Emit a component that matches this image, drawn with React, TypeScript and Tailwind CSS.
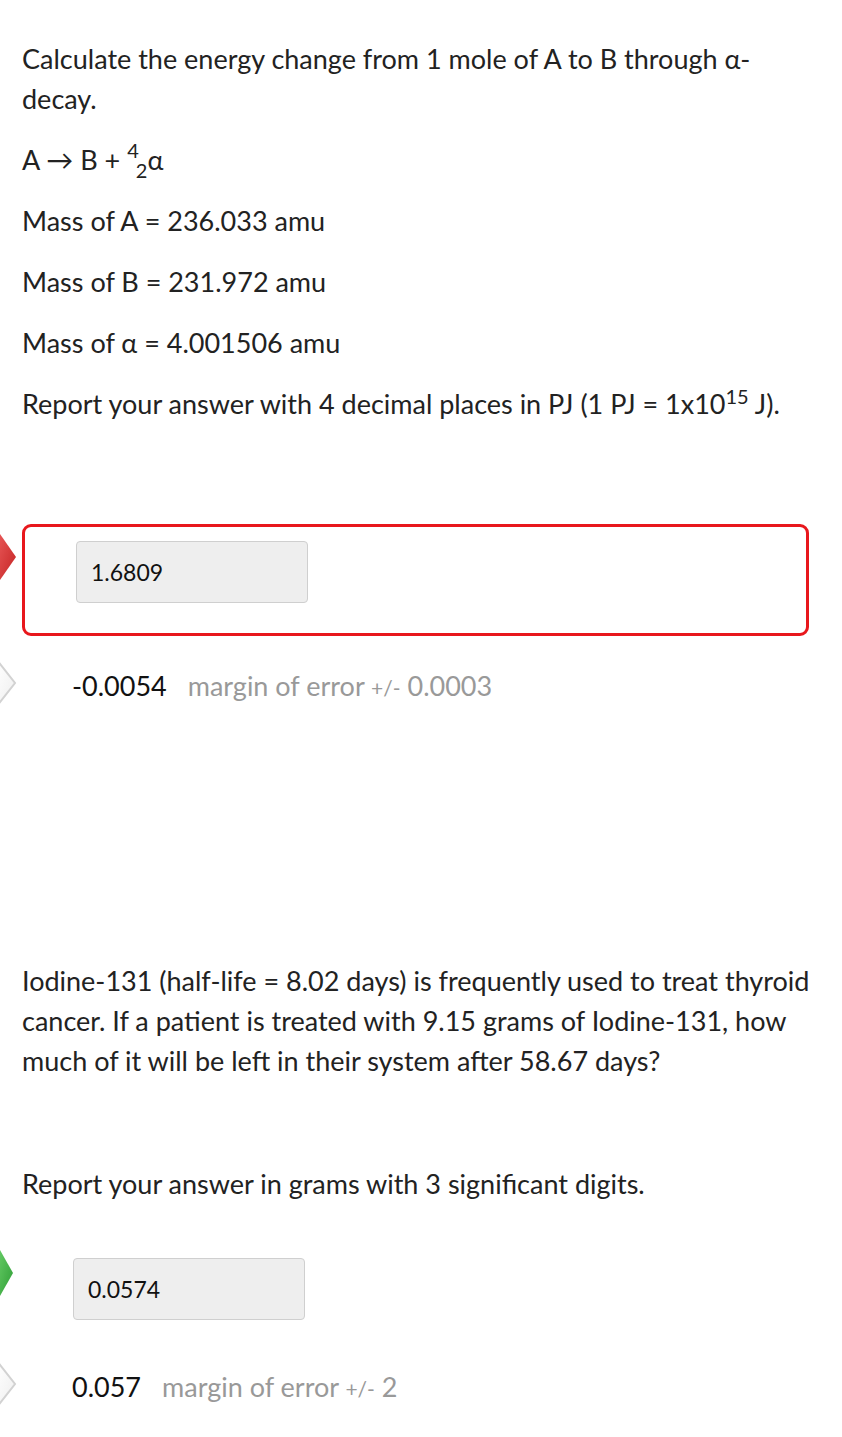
import React from 'react';

function Marker({ kind, top, tip }: { kind: 'red' | 'green' | 'gray'; top: number; tip: number }) {
  const id = `g-${kind}-${top}`;
  const stops =
    kind === 'red'
      ? ['#e65454', '#c42424']
      : kind === 'green'
        ? ['#62c862', '#2f9e36']
        : ['#ffffff', '#eeeeee'];
  return (
    <svg className="absolute left-0" style={{ top }} width={20} height={48} viewBox="0 0 20 48">
      <defs>
        <linearGradient id={id} x1="0" y1="0" x2="1" y2="1">
          <stop offset="0" stopColor={stops[0]} />
          <stop offset="1" stopColor={stops[1]} />
        </linearGradient>
      </defs>
      {kind === 'gray' ? (
        <polygon points={`-3,1 ${tip - 1},24 -3,47`} fill={`url(#${id})`} stroke="#d2d2d2" strokeWidth={2} />
      ) : (
        <polygon points={`0,1 ${tip},24 0,47`} fill={`url(#${id})`} />
      )}
    </svg>
  );
}

function AnswerInput({ value }: { value: string }) {
  return (
    <div className="w-[232px] h-[62px] rounded-[4px] border border-[#cfcfcf] bg-[#eeeeee] flex items-center px-[14px] text-[23px] text-[#111]">
      {value}
    </div>
  );
}

function Key({ value, margin }: { value: string; margin: string }) {
  return (
    <div className="flex items-baseline gap-[21px] text-[27px] leading-[40px]">
      <span className="text-[#111]">{value}</span>
      <span className="text-[#999]">
        margin of error <span className="text-[21px]">+/-</span> {margin}
      </span>
    </div>
  );
}

export default function App() {
  return (
    <div
      className="w-[842px] min-h-[1437px] bg-white text-[#222] overflow-hidden relative"
      style={{ fontFamily: 'Lato, "Noto Sans", sans-serif' }}
    >
      <div className="pt-[39px] pl-[22px] pr-[28px] text-[27px] leading-[40px]">
        <p className="mb-[21px]">Calculate the energy change from 1 mole of A to B through α-decay.</p>
        <p className="mb-[21px]">
          A → B +{' '}
          <span className="inline-flex items-start">
            <span className="text-[20px] leading-none relative -top-[12px]">4</span>
            <span className="text-[20px] leading-none relative top-[8px] -ml-[3px]">2</span>
          </span>
          α
        </p>
        <p className="mb-[21px]">Mass of A = 236.033 amu</p>
        <p className="mb-[21px]">Mass of B = 231.972 amu</p>
        <p className="mb-[21px]">Mass of α = 4.001506 amu</p>
        <p>
          Report your answer with 4 decimal places in PJ (1 PJ = 1x10
          <sup className="text-[20px]">15</sup> J).
        </p>
      </div>

      {/* first answer */}
      <div className="relative mt-[100px]">
        <Marker kind="red" top={9} tip={16} />
        <div className="ml-[22px] w-[787px] h-[112px] rounded-[9px] border-[3px] border-[#e8171c] pt-[14px] pl-[51px]">
          <AnswerInput value="1.6809" />
        </div>
      </div>
      <div className="relative mt-[30px] pl-[72px]">
        <Marker kind="gray" top={-7} tip={16} />
        <Key value="-0.0054" margin="0.0003" />
      </div>

      {/* second question */}
      <div className="mt-[253px] pl-[22px] pr-[28px] text-[27px] leading-[40px]">
        <p>
          Iodine-131 (half-life = 8.02 days) is frequently used to treat thyroid cancer. If a patient is treated
          with 9.15 grams of Iodine-131, how much of it will be left in their system after 58.67 days?
        </p>
        <p className="mt-[83px]">Report your answer in grams with 3 significant digits.</p>
      </div>

      <div className="relative mt-[54px] pl-[73px]">
        <Marker kind="green" top={-9} tip={13} />
        <AnswerInput value="0.0574" />
      </div>
      <div className="relative mt-[47px] pl-[72px]">
        <Marker kind="gray" top={-7} tip={16} />
        <Key value="0.057" margin="2" />
      </div>
    </div>
  );
}
